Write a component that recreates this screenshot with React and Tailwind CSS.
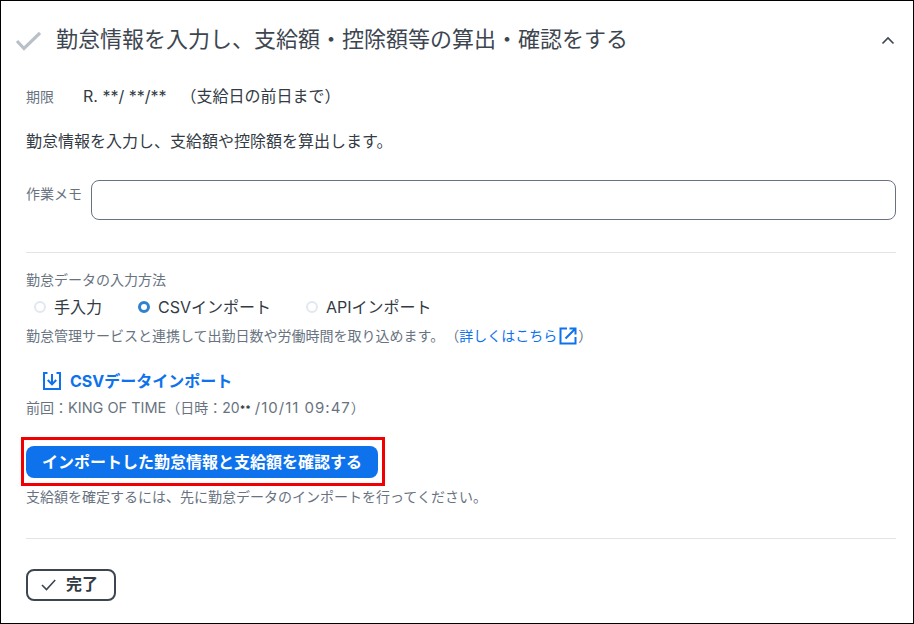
import React from "react";

function Radio({ checked, label, className }) {
  return (
    <div className={"flex items-center " + className}>
      {checked ? (
        <span className="w-[12px] h-[12px] rounded-full border-[3.5px] border-[#3182ce] bg-white mr-[8px]" />
      ) : (
        <span className="w-[12px] h-[12px] rounded-full border-[2px] border-[#e2e8f0] bg-white mr-[8px]" />
      )}
      <span className="text-[16px] leading-[24px] text-[#333b45]">{label}</span>
    </div>
  );
}

export default function App() {
  return (
    <div className="w-[914px] h-[624px] bg-white border border-black overflow-hidden font-['Inter','Noto_Sans_CJK_JP',sans-serif] text-[#333b45]">
      <div className="flex items-center h-[30px] mt-[23px] ml-[14px] mr-[17px]">
        <svg width="26" height="26" viewBox="0 0 26 26" fill="none" className="mr-[15px] mt-[2px]">
          <path d="M2 14L9 21.5L25 6" stroke="#b9c0c8" strokeWidth="3.2" />
        </svg>
        <h1 className="text-[22px] leading-[30px] text-[#3d4650] font-normal flex-1">勤怠情報を入力し、支給額・控除額等の算出・確認をする</h1>
        <svg width="14" height="10" viewBox="0 0 14 10" fill="none" className="mt-[4px] mr-[1px]">
          <path d="M1.5 7.5L7 2L12.5 7.5" stroke="#3d4650" strokeWidth="1.6" />
        </svg>
      </div>

      <div className="ml-[25px] mr-[17px]">
        <div className="flex items-center mt-[30px] h-[24px]">
          <span className="w-[57px] text-[14px] text-[#68737f]">期限</span>
          <span className="text-[16px] whitespace-pre">R. **/ **/**</span>
          <span className="text-[16px] ml-[14px]">（支給日の前日まで）</span>
        </div>

        <p className="text-[16px] leading-[24px] mt-[21px]">勤怠情報を入力し、支給額や控除額を算出します。</p>

        <div className="flex mt-[27px]">
          <span className="w-[65px] shrink-0 text-[14px] leading-[28px] text-[#68737f]">作業メモ</span>
          <div className="flex-1 h-[40px] rounded-[8px] border border-[#68737f]" />
        </div>

        <div className="h-px bg-[#e2e4e6] mt-[32px]" />

        <p className="text-[14px] leading-[20px] text-[#68737f] mt-[17px]">勤怠データの入力方法</p>
        <div className="flex items-center h-[24px] mt-[5px] ml-[8px]">
          <Radio label="手入力" className="w-[104px]" />
          <Radio checked label="CSVインポート" className="w-[168px]" />
          <Radio label="APIインポート" />
        </div>
        <p className="text-[14px] leading-[20px] text-[#68737f] mt-[7px] flex items-center">
          勤怠管理サービスと連携して出勤日数や労働時間を取り込めます。
          <span className="ml-[1px]">（</span>
          <span className="text-[#0e72ed] flex items-center">
            詳しくはこちら
            <svg width="20" height="20" viewBox="0 0 20 20" fill="none" className="ml-[1px]">
              <path d="M9 2.5H2.5V17.5H17.5V11" stroke="#0e72ed" strokeWidth="2" />
              <path d="M7.5 12.5L17 3M11.5 2.5H17.5V8.5" stroke="#0e72ed" strokeWidth="2" />
            </svg>
          </span>
          ）
        </p>

        <div className="flex items-center mt-[23px] ml-[16px] h-[24px] text-[#0e72ed] font-bold text-[16px]">
          <svg width="20" height="20" viewBox="0 0 20 20" fill="none" className="mr-[8px]">
            <path d="M5.5 2H2V18H18V2H14.5" stroke="#0e72ed" strokeWidth="2" />
            <path d="M10 3V13M5.8 9L10 13.4L14.2 9" stroke="#0e72ed" strokeWidth="2" />
          </svg>
          CSVデータインポート
        </div>
        <p className="text-[14px] leading-[20px] text-[#68737f] mt-[5px]">
          前回：<span className="text-[14.5px]">KING OF TIME</span>（日時：20<span className="text-[10px] font-bold text-[#333b45]">**</span> <span className="text-[15px] tracking-[1px]">/10/11 09:47</span>）
        </p>

        <div className="relative w-[352px] h-[32px] mt-[27px]">
          <button className="w-full h-full rounded-[8px] bg-[#0e72ed] text-white font-bold text-[16px] leading-[24px]">
            インポートした勤怠情報と支給額を確認する
          </button>
          <div className="absolute -left-[5px] -top-[9px] w-[364px] h-[49px] border-[3px] border-[#f00000]" />
        </div>
        <p className="text-[14px] leading-[20px] text-[#68737f] mt-[9px]">支給額を確定するには、先に勤怠データのインポートを行ってください。</p>

        <div className="h-px bg-[#e2e4e6] mt-[31px]" />

        <button className="flex items-center w-[90px] h-[32px] pl-[13px] mt-[30px] rounded-[8px] border-2 border-[#3d4650] text-[#333b45] font-bold text-[16px]">
          <svg width="15" height="12" viewBox="0 0 15 12" fill="none" className="mr-[10px]">
            <path d="M1 6L5.5 10.6L14.2 1" stroke="#3d4650" strokeWidth="1.6" />
          </svg>
          <span className="mb-[3px]">完了</span>
        </button>
      </div>
    </div>
  );
}
